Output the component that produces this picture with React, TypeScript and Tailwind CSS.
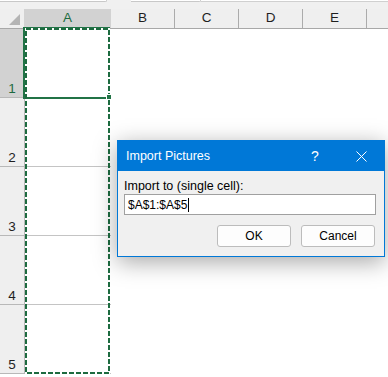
const font = { fontFamily: '"Liberation Sans", Arial, sans-serif' };

const columns = ['B', 'C', 'D', 'E'];
const rows = [1, 2, 3, 4, 5];

function ColumnHeader() {
  return (
    <div className="flex h-[20px] bg-[#efefef] border-b border-[#a8a8a8] text-[13.5px] text-[#1f1f1f]">
      <div className="relative w-[24px] shrink-0">
        <div className="absolute right-[4px] bottom-[3px] w-0 h-0 border-l-[11px] border-l-transparent border-b-[11px] border-b-[#b4b4b4]" />
      </div>
      <div className="w-[87px] shrink-0 bg-[#d2d2d2] flex items-center justify-center text-[#1e6b41]">A</div>
      {columns.map((c) => (
        <div key={c} className="w-[64px] shrink-0 border-r border-[#ababab] flex items-center justify-center">
          {c}
        </div>
      ))}
      <div className="flex-1" />
    </div>
  );
}

function SheetRow({ n }: { n: number }) {
  const active = n === 1;
  return (
    <div className="flex h-[69px]">
      <div
        className={`w-[25px] shrink-0 border-r border-b border-[#b8b8b8] flex items-end justify-center pb-[2px] text-[13.5px] leading-none ${
          active ? 'bg-[#d2d2d2] text-[#1e6b41]' : 'bg-[#efefef] text-[#1f1f1f]'
        }`}
      >
        {n}
      </div>
      <div className="w-[86px] shrink-0 border-b border-[#c4c4c4] bg-white" />
      <div className="flex-1 bg-white" />
    </div>
  );
}

function CloseIcon() {
  return (
    <svg width="11" height="11" viewBox="0 0 11 11" fill="none" stroke="white" strokeWidth="1">
      <path d="M0.5 0.5 L10.5 10.5 M10.5 0.5 L0.5 10.5" />
    </svg>
  );
}

function ImportDialog() {
  return (
    <div className="absolute left-[117px] top-[140px] w-[268px] h-[117px] border border-[#0078d7] bg-[#f0f0f0] shadow-[0_5px_22px_rgba(0,0,0,0.35)] flex flex-col">
      <div className="h-[30px] bg-[#0078d7] flex items-center text-white">
        <div className="flex-1 pl-[8px] text-[12.5px]">Import Pictures</div>
        <div className="w-[46px] flex justify-center text-[14px] font-light">?</div>
        <div className="w-[46px] flex justify-center">
          <CloseIcon />
        </div>
      </div>
      <div className="flex flex-col px-[6px] pt-[8px]">
        <div className="text-[12.5px] leading-[15px] text-black">Import to (single cell):</div>
        <div className="h-[21px] w-[252px] border border-[#a0a0a0] bg-white flex items-center pl-[3px] text-[12px] text-black">
          <span>$A$1:$A$5</span>
          <span className="ml-[1px] w-px h-[14px] bg-black" />
        </div>
        <div className="flex justify-end gap-[10px] mt-[10px] pr-[3px]">
          <button className="w-[74px] h-[22px] bg-[#fdfdfd] border border-[#bcbcbc] rounded-[3px] text-[12px] text-black">
            OK
          </button>
          <button className="w-[74px] h-[22px] bg-[#fdfdfd] border border-[#bcbcbc] rounded-[3px] text-[12px] text-black">
            Cancel
          </button>
        </div>
      </div>
    </div>
  );
}

export default function App() {
  return (
    <div className="relative w-[388px] h-[377px] overflow-hidden bg-white" style={font}>
      <div className="h-[9px] bg-[#f0f0f0] flex items-start">
        <div className="w-[107px] h-[2px] bg-white border-b border-r border-[#c8c8c8] rounded-br-[2px]" />
        <div className="w-[24px]" />
        <div className="w-[70px] h-[2px] bg-white border-b border-r border-[#c8c8c8] rounded-br-[2px]" />
        <div className="flex-1 h-[2px] bg-white border-b border-[#d0d0d0]" />
      </div>
      <ColumnHeader />
      {rows.map((n) => (
        <SheetRow key={n} n={n} />
      ))}

      {/* active cell A1 */}
      <div className="absolute left-[23px] top-[27px] w-[87px] h-[72px] border-2 border-[#217346]" />

      {/* copy marquee A1:A5 */}
      <svg className="absolute left-0 top-0 pointer-events-none" width="388" height="377">
        <rect x="26" y="29" width="83" height="344" fill="none" stroke="white" strokeWidth="2" />
        <rect x="26" y="29" width="83" height="344" fill="none" stroke="#1d6b40" strokeWidth="2" strokeDasharray="5 2" />
      </svg>

      {/* fill handle */}
      <div className="absolute left-[106px] top-[94px] w-[6px] h-[6px] bg-[#217346] border border-white" />

      <ImportDialog />
    </div>
  );
}
